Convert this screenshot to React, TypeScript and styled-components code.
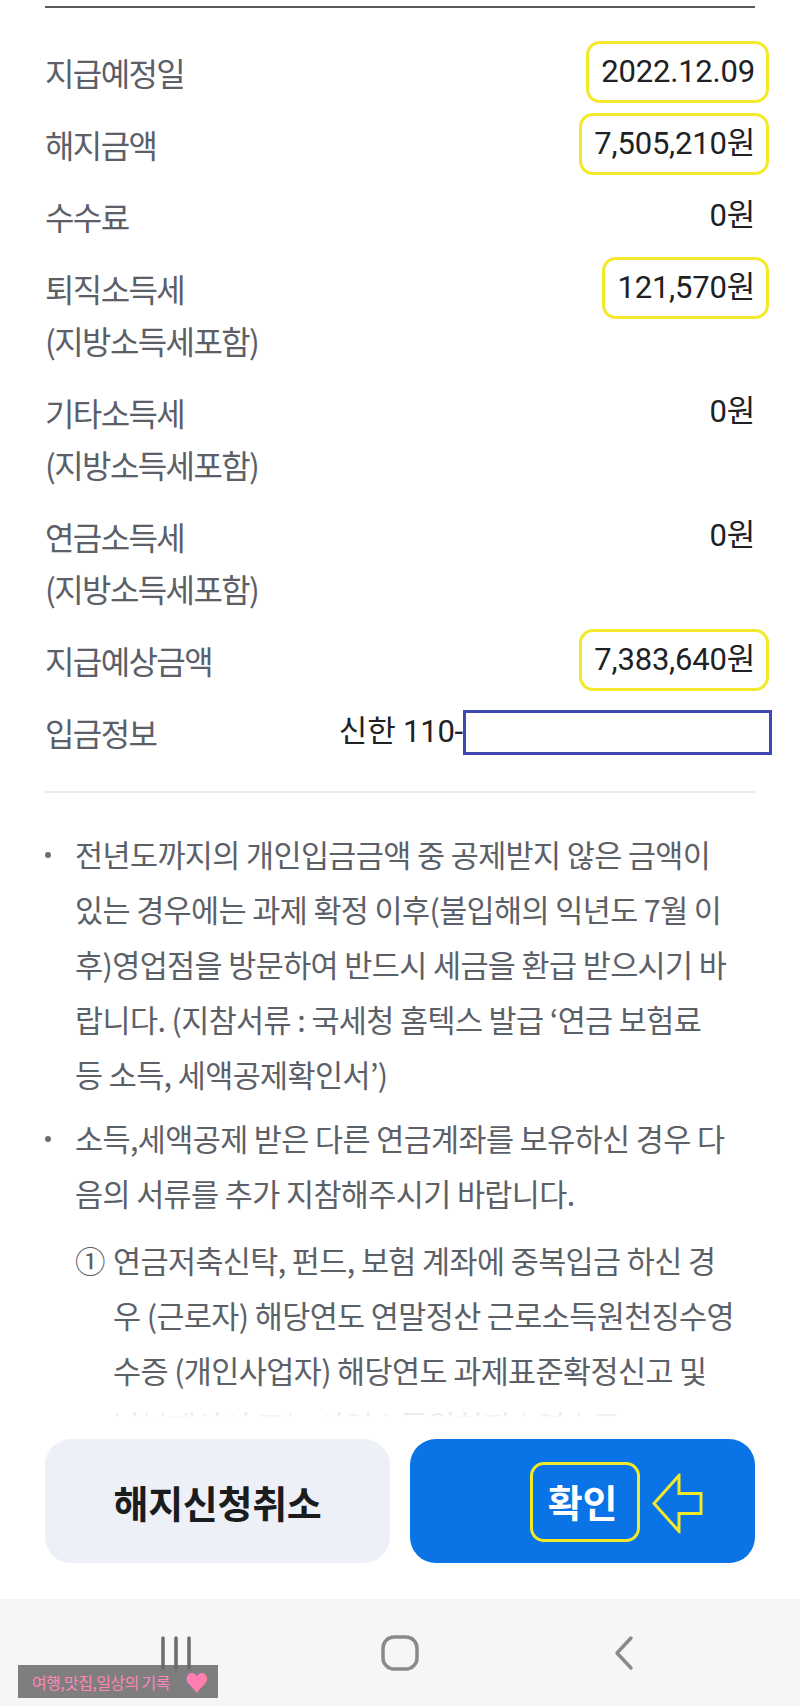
import React from "react";
import styled, { createGlobalStyle, css } from "styled-components";

const GlobalStyle = createGlobalStyle`
  html, body { margin: 0; padding: 0; background: #ffffff; }
  body {
    font-family: Roboto, "Noto Sans CJK KR", sans-serif;
    -webkit-font-smoothing: antialiased;
  }
  * { box-sizing: border-box; }
`;

const KR = `"Noto Sans CJK KR", "Noto Sans", sans-serif`;
const NUM = `Roboto, "Noto Sans CJK KR", sans-serif`;
const YELLOW = "#f2e928";

const Screen = styled.div`
  position: relative;
  width: 800px;
  height: 1706px;
  display: flex;
  flex-direction: column;
  overflow: hidden;
  background: #ffffff;
`;

const Content = styled.main`
  flex: 1;
  min-height: 0;
  overflow: hidden;
  padding: 6px 45px 0;
`;

const TopRule = styled.div`
  height: 2px;
  background: #58595b;
`;

const InfoList = styled.dl`
  margin: 28px 0 0;
  padding: 0;
`;

const Row = styled.div`
  display: flex;
  justify-content: space-between;
  align-items: flex-start;
  padding: 10px 0;
`;

const Label = styled.dt`
  margin: 0;
  font-family: ${KR};
  font-size: 32px;
  letter-spacing: -1.6px;
  line-height: 52px;
  color: #5b6068;
`;

const Value = styled.dd<{ $mark?: boolean }>`
  position: relative;
  margin: 0;
  font-family: ${NUM};
  font-size: 31px;
  letter-spacing: -0.2px;
  line-height: 52px;
  color: #202124;
  white-space: nowrap;
  display: flex;
  align-items: center;

  ${(p) =>
    p.$mark &&
    css`
      &::after {
        content: "";
        position: absolute;
        top: -5px;
        bottom: -5px;
        left: -15px;
        right: -14px;
        border: 3px solid ${YELLOW};
        border-radius: 14px;
      }
    `}
`;

const MaskBox = styled.span`
  display: inline-block;
  width: 309px;
  height: 45px;
  margin-right: -17px;
  border: 3px solid #3f48b0;
  background: #ffffff;
`;

const Divider = styled.hr`
  margin: 23px 0 0;
  border: 0;
  height: 2px;
  background: #ececec;
`;

const Notes = styled.ul`
  list-style: none;
  margin: 34px 0 0;
  padding: 0;
  font-family: ${KR};
  font-size: 30.5px;
  letter-spacing: -0.6px;
  line-height: 55px;
  color: #5c6067;
`;

const NoteItem = styled.li`
  display: flex;
  & + & {
    margin-top: 9px;
  }
`;

const Dot = styled.span`
  flex: none;
  width: 30px;
  height: 55px;
  display: flex;
  align-items: center;

  &::before {
    content: "";
    width: 6px;
    height: 6px;
    border-radius: 50%;
    background: #6a6e74;
  }
`;

const NoteBody = styled.div`
  flex: 1;
  min-width: 0;
`;

const Line = styled.span`
  display: block;
  white-space: nowrap;
`;

const SubItem = styled.div`
  display: flex;
  margin-top: 12px;
`;

const SubMarker = styled.span`
  flex: none;
  width: 38px;
`;

const BottomBar = styled.div`
  position: relative;
  flex: none;
  display: grid;
  grid-template-columns: 1fr 1fr;
  gap: 20px;
  padding: 21px 45px 36px;
  background: #ffffff;

  &::before {
    content: "";
    position: absolute;
    left: 0;
    right: 0;
    bottom: 100%;
    height: 34px;
    background: linear-gradient(rgba(255, 255, 255, 0), #ffffff);
  }
`;

const Button = styled.button<{ $primary?: boolean }>`
  height: 124px;
  border: 0;
  border-radius: 26px;
  display: flex;
  align-items: center;
  justify-content: center;
  font-family: ${KR};
  font-size: 38px;
  font-weight: 700;
  letter-spacing: -0.3px;
  background: ${(p) => (p.$primary ? "#0a73e6" : "#edf0f6")};
  color: ${(p) => (p.$primary ? "#ffffff" : "#1b1c1e")};
  padding: 0;
`;

const ConfirmLabel = styled.span`
  position: relative;
  line-height: 44px;

  &::after {
    content: "";
    position: absolute;
    top: -17px;
    bottom: -19px;
    left: -18px;
    right: -23px;
    border: 3px solid ${YELLOW};
    border-radius: 14px;
  }
`;

const PointArrow = styled.svg`
  position: absolute;
  left: calc(100% + 35px);
  top: 50%;
  transform: translateY(-46%);
`;

const NavBar = styled.nav`
  flex: none;
  height: 107px;
  background: #f6f6f6;
  display: grid;
  grid-template-columns: repeat(3, 1fr);
  align-items: center;
  justify-items: center;
  padding: 0 64px;
`;

const NavIcon = styled.svg`
  display: block;
`;

const Watermark = styled.div`
  position: absolute;
  left: 18px;
  bottom: 8px;
  width: 200px;
  height: 33px;
  display: flex;
  align-items: center;
  padding: 0 10px 0 14px;
  background: rgba(105, 105, 105, 0.85);
  color: #ff86b9;
  font-family: ${KR};
  font-size: 16px;
  letter-spacing: -0.6px;
  white-space: nowrap;
`;

const Heart = styled.span`
  margin-left: auto;
  font-size: 24px;
  color: #ff7fb4;
`;

type Item = { label: React.ReactNode; value: React.ReactNode; mark?: boolean };

const rows: Item[] = [
  { label: "지급예정일", value: "2022.12.09", mark: true },
  { label: "해지금액", value: "7,505,210원", mark: true },
  { label: "수수료", value: "0원" },
  {
    label: (
      <>
        퇴직소득세
        <br />
        (지방소득세포함)
      </>
    ),
    value: "121,570원",
    mark: true,
  },
  {
    label: (
      <>
        기타소득세
        <br />
        (지방소득세포함)
      </>
    ),
    value: "0원",
  },
  {
    label: (
      <>
        연금소득세
        <br />
        (지방소득세포함)
      </>
    ),
    value: "0원",
  },
  { label: "지급예상금액", value: "7,383,640원", mark: true },
];

export default function App() {
  return (
    <>
      <GlobalStyle />
      <Screen>
        <Content>
          <TopRule />
          <InfoList>
            {rows.map((r, i) => (
              <Row key={i}>
                <Label>{r.label}</Label>
                <Value $mark={r.mark}>{r.value}</Value>
              </Row>
            ))}
            <Row>
              <Label>입금정보</Label>
              <Value>
                신한 110-
                <MaskBox />
              </Value>
            </Row>
          </InfoList>
          <Divider />
          <Notes>
            <NoteItem>
              <Dot />
              <NoteBody>
                <Line>전년도까지의 개인입금금액 중 공제받지 않은 금액이</Line>
                <Line>있는 경우에는 과제 확정 이후(불입해의 익년도 7월 이</Line>
                <Line>후)영업점을 방문하여 반드시 세금을 환급 받으시기 바</Line>
                <Line>랍니다. (지참서류 : 국세청 홈텍스 발급 ‘연금 보험료</Line>
                <Line>등 소득, 세액공제확인서’)</Line>
              </NoteBody>
            </NoteItem>
            <NoteItem>
              <Dot />
              <NoteBody>
                <Line>소득,세액공제 받은 다른 연금계좌를 보유하신 경우 다</Line>
                <Line>음의 서류를 추가 지참해주시기 바랍니다.</Line>
                <SubItem>
                  <SubMarker>①</SubMarker>
                  <NoteBody>
                    <Line>연금저축신탁, 펀드, 보험 계좌에 중복입금 하신 경</Line>
                    <Line>우 (근로자) 해당연도 연말정산 근로소득원천징수영</Line>
                    <Line>수증 (개인사업자) 해당연도 과제표준확정신고 및</Line>
                    <Line>납부계산서 또는 사업소득원천징수영수증</Line>
                  </NoteBody>
                </SubItem>
              </NoteBody>
            </NoteItem>
          </Notes>
        </Content>

        <BottomBar>
          <Button type="button">해지신청취소</Button>
          <Button type="button" $primary>
            <ConfirmLabel>
              확인
              <PointArrow width="52" height="60" viewBox="0 0 52 60" fill="none">
                <path
                  d="M2 30 L27 2 L27 20 L49 20 L49 40 L27 40 L27 58 Z"
                  stroke={YELLOW}
                  strokeWidth="3"
                  strokeLinejoin="miter"
                />
              </PointArrow>
            </ConfirmLabel>
          </Button>
        </BottomBar>

        <NavBar>
          <NavIcon width="32" height="36" viewBox="0 0 32 36" fill="none">
            <path d="M3 3 V33 M16 3 V33 M29 3 V33" stroke="#6c6c6c" strokeWidth="3.5" strokeLinecap="round" />
          </NavIcon>
          <NavIcon width="38" height="36" viewBox="0 0 38 36" fill="none">
            <rect x="2" y="2" width="34" height="32" rx="11" stroke="#8a8a8a" strokeWidth="3.5" />
          </NavIcon>
          <NavIcon width="22" height="36" viewBox="0 0 22 36" fill="none">
            <path d="M18 3 L4 18 L18 33" stroke="#8a8a8a" strokeWidth="3.5" strokeLinecap="round" strokeLinejoin="round" />
          </NavIcon>
        </NavBar>

        <Watermark>
          여행,맛집,일상의 기록
          <Heart>♥</Heart>
        </Watermark>
      </Screen>
    </>
  );
}
